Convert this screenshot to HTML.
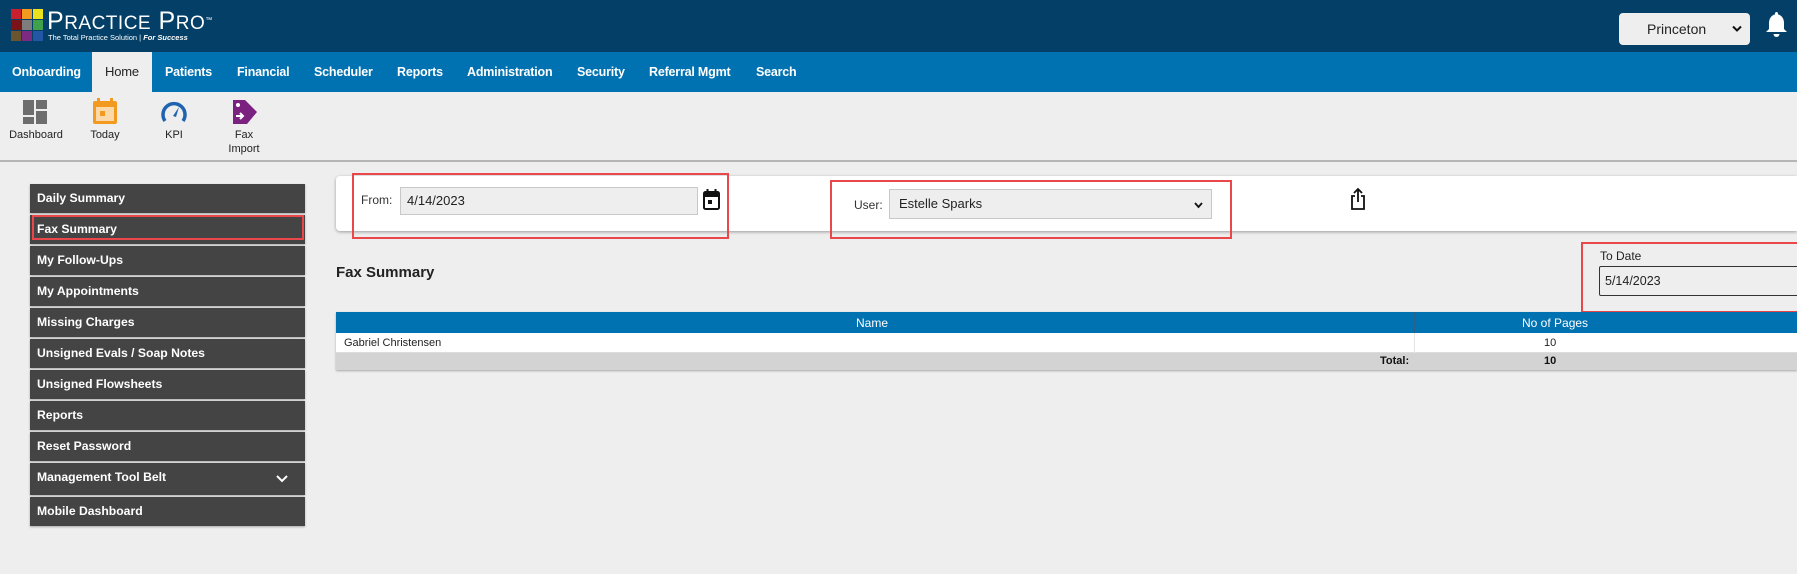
<!DOCTYPE html>
<html><head><style>
*{box-sizing:border-box;margin:0;padding:0}
body{width:1797px;height:574px;overflow:hidden;background:#eeeeee;font-family:"Liberation Sans",Arial,sans-serif;position:relative}
.abs{position:absolute}
#hdr{left:0;top:0;width:1797px;height:52px;background:#033f66}
#nav{left:0;top:52px;width:1797px;height:40px;background:#0071b1;box-shadow:0 2px 2px rgba(0,0,0,.25)}
.ni{position:absolute;top:0;height:40px;line-height:40px;color:#fff;font-size:12.5px;font-weight:bold;letter-spacing:-0.2px}
#tb{left:0;top:92px;width:1797px;height:70px;background:#eee;border-bottom:2px solid #b5b5b5}
.tl{position:absolute;font-size:11px;color:#222;text-align:center;width:70px;line-height:14px}
.si{position:absolute;left:30px;width:275px;background:#444;color:#fff;font-size:12.2px;font-weight:bold;padding-left:7px;box-shadow:0 1px 2px rgba(0,0,0,.3)}
.red{position:absolute;border:2px solid #e9474a}
</style></head><body>
<div id="hdr" class="abs">
 <div class="abs" style="left:11px;top:9px;width:33px;height:33px">
  <div class="abs" style="left:0;top:0;width:10px;height:10px;background:#c8202d"></div>
  <div class="abs" style="left:11px;top:0;width:10px;height:10px;background:#f29a1f"></div>
  <div class="abs" style="left:22px;top:0;width:10px;height:10px;background:#ece11d"></div>
  <div class="abs" style="left:0;top:11px;width:10px;height:10px;background:#7a1419"></div>
  <div class="abs" style="left:11px;top:11px;width:10px;height:10px;background:#7d7d7d"></div>
  <div class="abs" style="left:22px;top:11px;width:10px;height:10px;background:#3fa24a"></div>
  <div class="abs" style="left:0;top:22px;width:10px;height:10px;background:#6a5530"></div>
  <div class="abs" style="left:11px;top:22px;width:10px;height:10px;background:#7d2a83"></div>
  <div class="abs" style="left:22px;top:22px;width:10px;height:10px;background:#2456a6"></div>
 </div>
 <div class="abs" style="left:47px;top:8px;color:#fff;font-size:25px;letter-spacing:0.5px;line-height:26px">P<span style="font-size:19px">RACTICE</span> P<span style="font-size:19px">RO</span><span style="font-size:7px;vertical-align:top">™</span></div>
 <div class="abs" style="left:48px;top:33px;color:#fff;font-size:7.5px">The Total Practice Solution | <i><b>For Success</b></i></div>
 <div class="abs" style="left:1619px;top:13px;width:131px;height:32px;background:#eee;border-radius:4px;font-size:14px;color:#222;line-height:32px;padding-left:28px">Princeton<svg class="abs" style="right:8px;top:12px" width="10" height="8" viewBox="0 0 10 8"><path d="M1 1.5l4 4 4-4" stroke="#111" stroke-width="2" fill="none"/></svg></div>
 <svg class="abs" style="left:1765px;top:11px" width="23" height="27" viewBox="0 0 23 27"><path d="M11.5 1c1 0 1.5.7 1.5 1.6v.8C17 4.5 19 8 19 12v6l3 3H1l3-3v-6C4 8 6 4.5 10 3.4v-.8C10 1.7 10.5 1 11.5 1z" fill="#fff"/><path d="M8.5 23h6a3 3 0 0 1-6 0z" fill="#fff"/></svg>
</div>
<div id="nav" class="abs">
 <div class="abs" style="left:92px;top:0;width:60px;height:40px;background:#eee"></div>
 <div class="ni" style="left:12px">Onboarding</div>
 <div class="ni" style="left:105px;color:#222;font-weight:normal;font-size:13px">Home</div>
 <div class="ni" style="left:165px">Patients</div>
 <div class="ni" style="left:237px">Financial</div>
 <div class="ni" style="left:314px">Scheduler</div>
 <div class="ni" style="left:397px">Reports</div>
 <div class="ni" style="left:467px">Administration</div>
 <div class="ni" style="left:577px">Security</div>
 <div class="ni" style="left:649px">Referral Mgmt</div>
 <div class="ni" style="left:756px">Search</div>
</div>
<div id="tb" class="abs">
 <svg class="abs" style="left:23px;top:8px" width="24" height="24"><rect x="0" y="0" width="11" height="15" fill="#6d6d6d"/><rect x="13" y="0" width="11" height="9" fill="#6d6d6d"/><rect x="0" y="17" width="11" height="7" fill="#6d6d6d"/><rect x="13" y="11" width="11" height="13" fill="#6d6d6d"/></svg>
 <svg class="abs" style="left:93px;top:6px" width="24" height="26"><rect x="0" y="3" width="24" height="23" rx="2" fill="#f29a1f"/><rect x="4" y="0" width="3" height="5" fill="#f29a1f"/><rect x="17" y="0" width="3" height="5" fill="#f29a1f"/><rect x="3" y="9" width="18" height="14" fill="#fbd9a8"/><rect x="7" y="13" width="5" height="5" fill="#f29a1f"/></svg>
 <svg class="abs" style="left:161px;top:8px" width="26" height="24" viewBox="0 0 26 24"><path d="M4 21A11 11 0 1 1 22 21" stroke="#1f63b0" stroke-width="3.5" fill="none"/><path d="M12 16l6-9-3 10z" fill="#1f63b0"/></svg>
 <svg class="abs" style="left:231px;top:6px" width="28" height="28" viewBox="0 0 28 28"><path d="M2 2h12l12 12-10 12-14-0z" fill="#7b2180"/><circle cx="7" cy="7" r="2" fill="#fff"/><path d="M5 18h7M9 15l3 3-3 3" stroke="#fff" stroke-width="2" fill="none"/></svg>
 <div class="tl" style="left:1px;top:36px">Dashboard</div>
 <div class="tl" style="left:70px;top:36px">Today</div>
 <div class="tl" style="left:139px;top:36px">KPI</div>
 <div class="tl" style="left:209px;top:36px">Fax<br>Import</div>
</div>
<div class="si" style="top:184px;height:29px;line-height:29px">Daily Summary</div>
<div class="si" style="top:215px;height:29px;line-height:29px">Fax Summary</div>
<div class="si" style="top:246px;height:29px;line-height:29px">My Follow-Ups</div>
<div class="si" style="top:277px;height:29px;line-height:29px">My Appointments</div>
<div class="si" style="top:308px;height:29px;line-height:29px">Missing Charges</div>
<div class="si" style="top:339px;height:29px;line-height:29px">Unsigned Evals / Soap Notes</div>
<div class="si" style="top:370px;height:29px;line-height:29px">Unsigned Flowsheets</div>
<div class="si" style="top:401px;height:29px;line-height:29px">Reports</div>
<div class="si" style="top:432px;height:29px;line-height:29px">Reset Password</div>
<div class="si" style="top:463px;height:32px;line-height:29px">Management Tool Belt<svg class="abs" style="left:246px;top:12px" width="12" height="8"><path d="M1 1l5 5 5-5" stroke="#fff" stroke-width="2" fill="none"/></svg></div>
<div class="si" style="top:497px;height:29px;line-height:29px">Mobile Dashboard</div>
<div class="red" style="left:32px;top:215px;width:272px;height:25px"></div>

<div class="abs" style="left:336px;top:176px;width:1461px;height:55px;background:#fff;border-radius:4px 0 0 4px;box-shadow:0 1px 3px rgba(0,0,0,.35)"></div>
<div class="abs" style="left:361px;top:193px;font-size:12px;color:#333">From:</div>
<div class="abs" style="left:400px;top:187px;width:298px;height:28px;background:#eee;border:1px solid #c8c8c8;font-size:13px;color:#222;line-height:26px;padding-left:6px">4/14/2023</div>
<svg class="abs" style="left:703px;top:189px" width="17" height="21" viewBox="0 0 17 21"><rect x="1" y="3" width="15" height="17" rx="1.5" fill="none" stroke="#111" stroke-width="2"/><rect x="1" y="3" width="15" height="5" fill="#111"/><rect x="3.5" y="0" width="2" height="4" fill="#111"/><rect x="11.5" y="0" width="2" height="4" fill="#111"/><rect x="5" y="11" width="4" height="4" fill="#111"/></svg>
<div class="red" style="left:352px;top:173px;width:377px;height:66px"></div>
<div class="abs" style="left:854px;top:198px;font-size:12px;color:#333">User:</div>
<div class="abs" style="left:889px;top:189px;width:323px;height:30px;background:#eee;border:1px solid #c8c8c8;font-size:13px;color:#222;line-height:28px;padding-left:9px">Estelle Sparks<svg class="abs" style="right:8px;top:12px" width="9" height="7"><path d="M1 1l3.5 4 3.5-4" stroke="#111" stroke-width="1.8" fill="none"/></svg></div>
<div class="red" style="left:830px;top:180px;width:402px;height:59px"></div>
<svg class="abs" style="left:1350px;top:187px" width="16" height="23" viewBox="0 0 16 23"><path d="M5 9H2v13h12V9h-3" stroke="#111" stroke-width="1.8" fill="none"/><path d="M8 15V2M4 6l4-4 4 4" stroke="#111" stroke-width="1.8" fill="none"/></svg>
<div class="abs" style="left:336px;top:264px;font-size:15px;font-weight:bold;color:#222">Fax Summary</div>
<div class="abs" style="left:1600px;top:249px;font-size:12px;color:#222">To Date</div>
<div class="abs" style="left:1599px;top:266px;width:200px;height:30px;background:#eee;border:1px solid #333;border-radius:2px;font-size:12.5px;color:#222;line-height:28px;padding-left:5px">5/14/2023</div>
<div class="red" style="left:1581px;top:242px;width:218px;height:71px"></div>

<div class="abs" style="left:336px;top:312px;width:1461px;height:58px;box-shadow:0 1px 2px rgba(0,0,0,.3)">
 <div class="abs" style="left:0;top:0;width:1461px;height:21px;background:#0071b1;color:#fff;font-size:12px"><span class="abs" style="left:520px;top:4px">Name</span><span class="abs" style="left:1078px;top:0;width:1px;height:21px;background:#2a5f86"></span><span class="abs" style="left:1186px;top:4px">No of Pages</span></div>
 <div class="abs" style="left:0;top:21px;width:1461px;height:20px;background:#fff;font-size:11px;color:#222;border-bottom:1px solid #ddd"><span class="abs" style="left:8px;top:4px">Gabriel Christensen</span><span class="abs" style="left:1078px;top:0;width:1px;height:20px;background:#e4e4e4"></span><span class="abs" style="left:1208px;top:4px">10</span></div>
 <div class="abs" style="left:0;top:41px;width:1461px;height:17px;background:#d3d3d3;font-size:11px;font-weight:bold;color:#111"><span class="abs" style="left:1044px;top:2px">Total:</span><span class="abs" style="left:1208px;top:2px">10</span></div>
</div>
</body></html>
